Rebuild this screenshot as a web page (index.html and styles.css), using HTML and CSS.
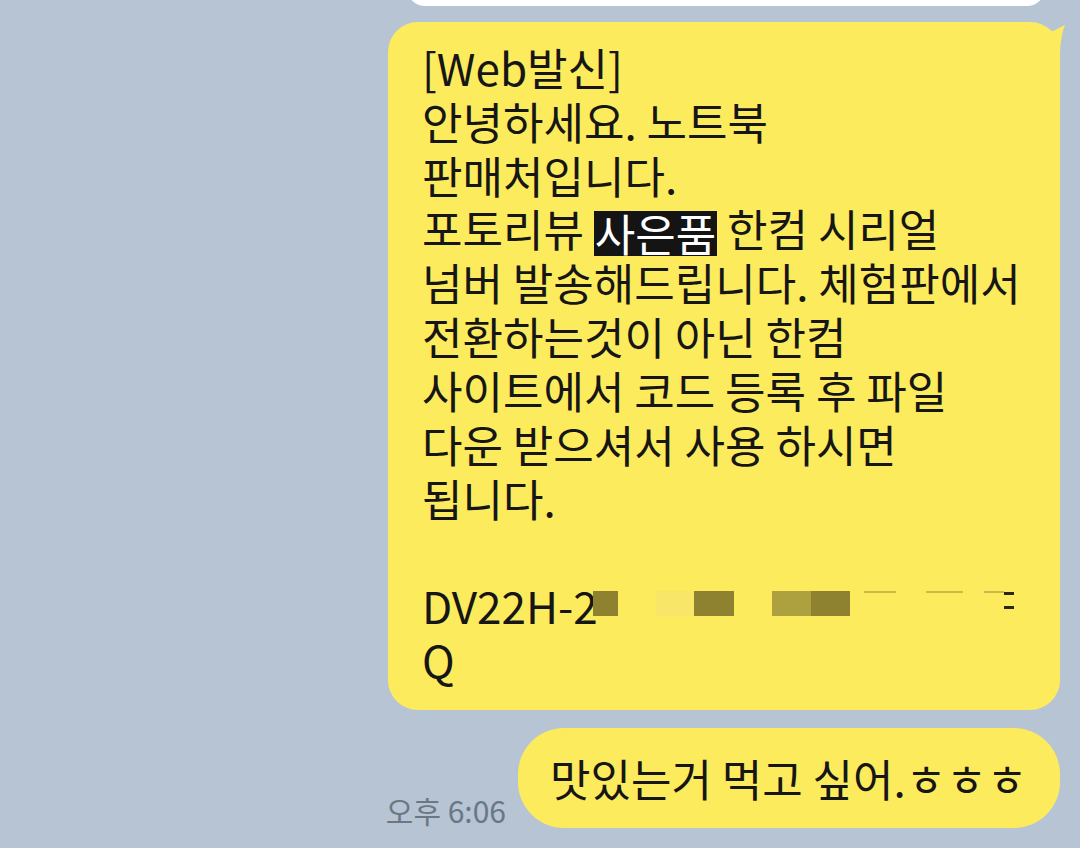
FILE: index.html
```html
<!DOCTYPE html>
<html>
<head>
    <title>Chat</title>
    <meta charset="utf-8">
    <meta name="viewport" content="width=device-width, initial-scale=1">
    <link rel="stylesheet" href="styles.css">
</head>

<body>

    <div class="chat">
        <!-- tail end of the previous message, cut off by the top of the screen -->
        <div class="bubble-prev"></div>

        <div class="row">
            <div class="bubble bubble-long">
                <svg class="tail" width="40" height="40" viewBox="0 0 40 40">
                    <path d="M16 12 Q27 9 37 3 Q33 12 32 30 L16 30 Z" fill="#fdeb5e"/>
                </svg>
                [Web발신]<br>
                안녕하세요. 노트북<br>
                판매처입니다.<br>
                포토리뷰 <span class="mark">사은품</span> 한컴 시리얼<br>
                넘버 발송해드립니다. 체험판에서<br>
                전환하는것이 아닌 한컴<br>
                사이트에서 코드 등록 후 파일<br>
                다운 받으셔서 사용 하시면<br>
                됩니다.<br>
                <br>
                DV22H-2<span class="mosaic">
                    <span class="px dark" style="width: 25px"></span>
                    <span class="px gap" style="width: 38px"></span>
                    <span class="px faint" style="width: 38px"></span>
                    <span class="px dark" style="width: 40px"></span>
                    <span class="px gap" style="width: 38px"></span>
                    <span class="px mid" style="width: 39px"></span>
                    <span class="px dark" style="width: 39px"></span>
                    <span class="px gap" style="width: 14px"></span>
                    <span class="px dash" style="width: 32px"></span>
                    <span class="px gap" style="width: 30px"></span>
                    <span class="px dash" style="width: 37px"></span>
                    <span class="px gap" style="width: 21px"></span>
                    <span class="px dash" style="width: 20px"></span>
                    <span class="px eq" style="width: 10px"></span>
                </span><br>
                Q
            </div>
        </div>

        <div class="row">
            <span class="time">오후 6:06</span>
            <div class="bubble bubble-short">맛있는거 먹고 싶어.ㅎㅎㅎ</div>
        </div>
    </div>

</body>
</html>
```

FILE: styles.css
```css
body {
    margin: 0;
    background-color: #b6c4d4;
    font-family: "Noto Sans CJK KR", "Noto Sans", sans-serif;
    color: #161616;
    overflow: hidden;
}

.chat {
    display: flex;
    flex-direction: column;
    align-items: flex-end;
    padding-right: 20px;
}

.bubble-prev {
    width: 638px;
    height: 36px;
    margin-top: -30px;
    margin-right: 15px;
    background-color: #ffffff;
    border-radius: 26px;
}

.row {
    display: flex;
    align-items: flex-end;
}

.row + .row {
    margin-top: 18px;
}

.bubble-prev + .row {
    margin-top: 16px;
}

.bubble {
    position: relative;
    background-color: #fdeb5e;
    font-size: 44px;
    white-space: nowrap;
}

.bubble-long {
    width: 604px;
    padding: 19px 34px 23px;
    line-height: 53.8px;
    border-radius: 30px;
}

.tail {
    position: absolute;
    top: 0;
    right: -8px;
}

.mark {
    display: inline-block;
    line-height: 45px;
    vertical-align: -5px;
    padding: 0 1px;
    background-color: #141414;
    color: #ffffff;
}

.mosaic {
    display: inline-flex;
    height: 25px;
    margin-left: -5px;
    vertical-align: 8px;
}

.px {
    height: 25px;
    box-sizing: border-box;
}

.px.dark {
    background-color: #8e8130;
}

.px.mid {
    background-color: #aca03f;
}

.px.faint {
    background-color: #f7e667;
}

.px.dash {
    border-top: 2px solid #c8ba4c;
}

.px.eq {
    height: 17px;
    margin-top: 1px;
    border-top: 3px solid #2a2612;
    border-bottom: 3px solid #2a2612;
}

.bubble-short {
    width: 478px;
    height: 100px;
    padding: 0 32px;
    line-height: 100px;
    border-radius: 46px;
}

.time {
    margin-right: 12px;
    font-size: 30px;
    line-height: 36px;
    color: #6b7785;
}
```
